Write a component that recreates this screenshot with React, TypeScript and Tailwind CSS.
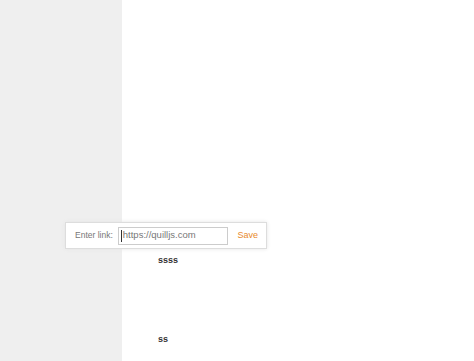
export default function App() {
  return (
    <div className="relative flex h-[361px] w-[474px] overflow-hidden bg-white font-['Liberation_Sans',Arial,sans-serif]">
      {/* sidebar */}
      <aside className="h-full w-[122px] shrink-0 bg-[#efefef]" />

      {/* editor area */}
      <main className="flex-1 pl-[36px] pt-[255px] text-[9px] font-bold text-[#333]">
        <p className="leading-[11px]">ssss</p>
        <p className="mt-[68px] leading-[11px]">ss</p>
      </main>

      {/* link tooltip */}
      <div className="absolute left-[65px] top-[222px] flex h-[27px] w-[202px] items-center whitespace-nowrap border border-[#ddd] bg-white pl-[9px] pr-[8px] text-[#777] shadow-[0_0_4px_#e4e4e4]">
        <span className="mr-[5px] shrink-0 text-[8.5px]">Enter link:</span>
        <div className="flex h-[18px] w-[110px] shrink-0 items-center border border-[#ccc] pl-[2px] text-[9.5px] text-[#777]">
          <span className="mr-[1px] h-[12px] w-px bg-[#333]" />
          <span>https://quilljs.com</span>
        </div>
        <span className="ml-auto text-[9px] text-[#e8892b]">Save</span>
      </div>
    </div>
  );
}
